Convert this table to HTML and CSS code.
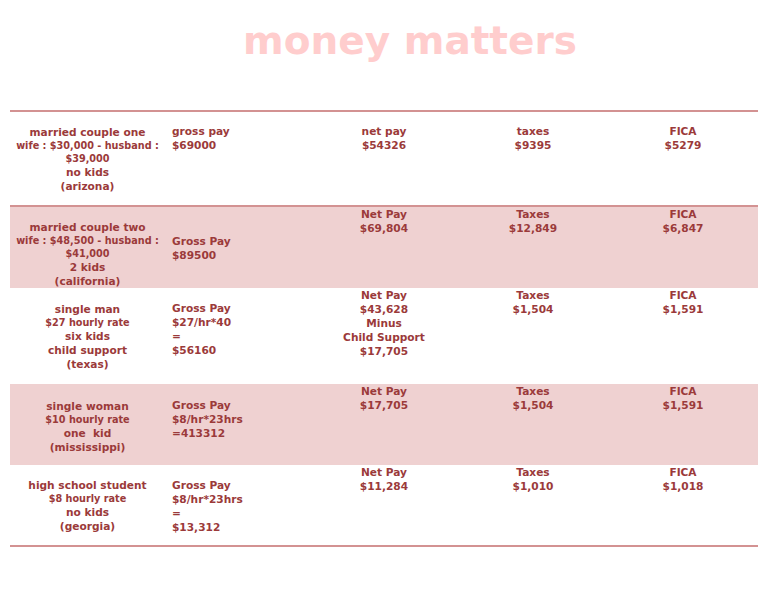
FILE: index.html
```html
<!DOCTYPE html>
<html>
<head>
<meta charset="utf-8">
<link rel="stylesheet" href="styles.css">
</head>
<body>
<h1 class="title">money matters</h1>
<table class="money">
  <colgroup>
    <col class="c1"><col class="c2"><col class="c3"><col class="c4"><col class="c5">
  </colgroup>
  <tr class="r1">
    <td class="who">
      <div>married couple one</div>
      <div class="sm">wife : $30,000 - husband :</div>
      <div class="sm">$39,000</div>
      <div>no kids</div>
      <div>(arizona)</div>
    </td>
    <td class="gross">gross pay<br>$69000</td>
    <td class="num">net pay<br>$54326</td>
    <td class="num">taxes<br>$9395</td>
    <td class="num">FICA<br>$5279</td>
  </tr>
  <tr class="r2 shade">
    <td class="who">
      <div>married couple two</div>
      <div class="sm">wife : $48,500 - husband :</div>
      <div class="sm">$41,000</div>
      <div>2 kids</div>
      <div>(california)</div>
    </td>
    <td class="gross mid">Gross Pay<br>$89500</td>
    <td class="num">Net Pay<br>$69,804</td>
    <td class="num">Taxes<br>$12,849</td>
    <td class="num">FICA<br>$6,847</td>
  </tr>
  <tr class="r3">
    <td class="who">
      <div>single man</div>
      <div class="sm">$27 hourly rate</div>
      <div>six kids</div>
      <div>child support</div>
      <div>(texas)</div>
    </td>
    <td class="gross">Gross Pay<br>$27/hr*40<br>=<br>$56160</td>
    <td class="num">Net Pay<br>$43,628<br>Minus<br>Child Support<br>$17,705</td>
    <td class="num">Taxes<br>$1,504</td>
    <td class="num">FICA<br>$1,591</td>
  </tr>
  <tr class="r4 shade">
    <td class="who">
      <div>single woman</div>
      <div class="sm">$10 hourly rate</div>
      <div>one&nbsp; kid</div>
      <div>(mississippi)</div>
    </td>
    <td class="gross">Gross Pay<br>$8/hr*23hrs<br>=413312</td>
    <td class="num">Net Pay<br>$17,705</td>
    <td class="num">Taxes<br>$1,504</td>
    <td class="num">FICA<br>$1,591</td>
  </tr>
  <tr class="r5">
    <td class="who">
      <div>high school student</div>
      <div class="sm">$8 hourly rate</div>
      <div>no kids</div>
      <div>(georgia)</div>
    </td>
    <td class="gross">Gross Pay<br>$8/hr*23hrs<br>=<br>$13,312</td>
    <td class="num">Net Pay<br>$11,284</td>
    <td class="num">Taxes<br>$1,010</td>
    <td class="num">FICA<br>$1,018</td>
  </tr>
</table>
</body>
</html>
```
FILE: styles.css
```css
html, body {
  margin: 0;
  padding: 0;
  background: #ffffff;
}
body {
  font-family: "DejaVu Sans", "Liberation Sans", sans-serif;
  font-weight: bold;
  color: #9b3a3a;
}
.title {
  margin: 18px 0 0 0;
  padding-left: 52px;
  text-align: center;
  font-size: 39px;
  line-height: 46px;
  font-weight: bold;
  color: #ffcdcd;
}
.money {
  margin: 46px 0 0 10px;
  width: 748px;
  border-collapse: collapse;
  table-layout: fixed;
  border-top: 2px solid #d39292;
  border-bottom: 2px solid #d39292;
  font-size: 10.6px;
  line-height: 14px;
}
.c1 { width: 155px; }
.c2 { width: 145px; }
.c3 { width: 148px; }
.c4 { width: 150px; }
.c5 { width: 150px; }
.money td {
  padding: 0;
  vertical-align: top;
}
.shade td {
  background: #efd1d1;
}
.r1 { height: 95px; }
.r2 { height: 82px; border-top: 2px solid #d39292; }
.r3 { height: 96px; }
.r4 { height: 81px; }
.r5 { height: 81px; }
.money td.who {
  text-align: center;
  vertical-align: middle;
}
.r2 td.who {
  padding-top: 13px;
}
.r4 td.who {
  padding-top: 3px;
}
.r5 td.who {
  padding-top: 1px;
}
.sm {
  font-size: 9.7px;
  line-height: 13px;
}
.money td.gross {
  padding: 13px 0 0 7px;
  text-align: left;
}
.r4 td.gross {
  padding-top: 14px;
}
.money td.gross.mid {
  vertical-align: middle;
  padding-top: 0;
}
.money td.num {
  text-align: center;
  padding-top: 0;
}
.r1 td.num,
.r1 td.gross {
  padding-top: 12px;
}
```
